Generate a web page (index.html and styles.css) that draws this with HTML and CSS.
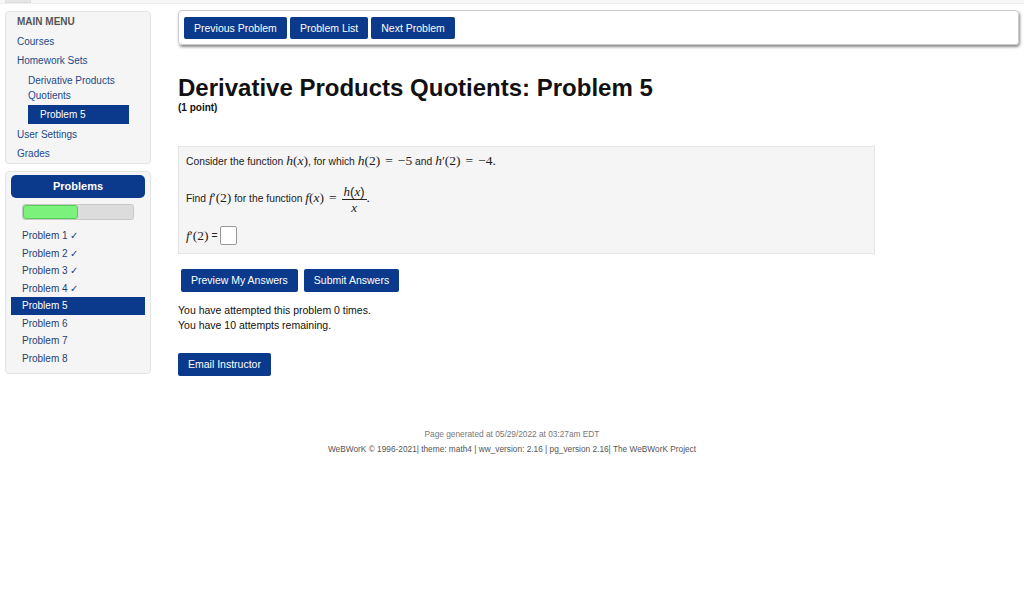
FILE: index.html
```html
<!DOCTYPE html>
<html lang="en">
<head>
  <meta charset="UTF-8">
  <title>Derivative Products Quotients: Problem 5</title>
  <link rel="stylesheet" href="styles.css">
</head>
<body>
<div class="topbar"><span class="topbar-btn"></span></div>
<div class="page">
  <div class="sidebar">
    <div class="well">
      <div class="menu-title">MAIN MENU</div>
      <ul class="menu">
        <li><a href="#">Courses</a></li>
        <li><a href="#">Homework Sets</a></li>
        <li>
          <ul class="submenu">
            <li class="wrap"><a href="#">Derivative Products Quotients</a></li>
            <li class="active"><a href="#">Problem 5</a></li>
          </ul>
        </li>
        <li><a href="#">User Settings</a></li>
        <li><a href="#">Grades</a></li>
      </ul>
    </div>
    <div class="well problems">
      <div class="problems-head">Problems</div>
      <div class="progress"><div class="progress-fill" style="width: 50%"></div></div>
      <ul class="problem-list">
        <li><a href="#">Problem 1 &#10003;</a></li>
        <li><a href="#">Problem 2 &#10003;</a></li>
        <li><a href="#">Problem 3 &#10003;</a></li>
        <li><a href="#">Problem 4 &#10003;</a></li>
        <li class="active"><a href="#">Problem 5</a></li>
        <li><a href="#">Problem 6</a></li>
        <li><a href="#">Problem 7</a></li>
        <li><a href="#">Problem 8</a></li>
      </ul>
    </div>
  </div>

  <div class="main">
    <div class="navbar">
      <a class="btn" href="#">Previous Problem</a>
      <a class="btn" href="#">Problem List</a>
      <a class="btn" href="#">Next Problem</a>
    </div>

    <h1>Derivative Products Quotients: Problem 5</h1>
    <div class="points">(1 point)</div>

    <div class="problem">
      <p>Consider the function <span class="m"><i>h</i>(<i>x</i>)</span>, for which <span class="m"><i>h</i>(2)<span class="op">=</span>&minus;5</span> and <span class="m"><i>h</i>&prime;(2)<span class="op">=</span>&minus;4.</span></p>
      <p class="find">Find <span class="m"><i>f</i>&prime;(2)</span> for the function <span class="m"><i>f</i>(<i>x</i>)<span class="op">=</span></span><span class="frac"><span class="num"><i>h</i>(<i>x</i>)</span><span class="den"><i>x</i></span></span><span class="m">.</span></p>
      <p class="answer"><span class="m"><i>f</i>&prime;(2)</span> = <input class="ans" type="text"></p>
    </div>

    <div class="actions">
      <a class="btn" href="#">Preview My Answers</a>
      <a class="btn" href="#">Submit Answers</a>
    </div>

    <div class="attempts">
      You have attempted this problem 0 times.<br>
      You have 10 attempts remaining.
    </div>

    <a class="btn email" href="#">Email Instructor</a>
  </div>
</div>

<div class="footer">
  <div>Page generated at 05/29/2022 at 03:27am EDT</div>
  <div>WeBWorK &copy; 1996-2021| theme: math4 | ww_version: 2.16 | pg_version 2.16| The WeBWorK Project</div>
</div>
</body>
</html>
```

FILE: styles.css
```css
* {
  box-sizing: border-box;
  font-family: "Liberation Sans", Arial, sans-serif;
}
body {
  margin: 0;
  background: white;
  color: #222;
  font-size: 10.5px;
}
a {
  text-decoration: none;
}
ul {
  list-style: none;
  margin: 0;
  padding: 0;
}
.topbar {
  height: 4px;
  background: #f7f7f7;
  border-bottom: 1px solid #eee;
  padding-left: 5px;
}
.topbar-btn {
  display: block;
  width: 26px;
  height: 3px;
  background: #e6e6e6;
  border: 1px solid #ddd;
  border-top: 0;
}
.page {
  display: flex;
  padding: 6px 5px 0 5px;
  gap: 27px;
}
.sidebar {
  width: 146px;
  flex-shrink: 0;
  display: flex;
  flex-direction: column;
  gap: 7px;
  padding-top: 1px;
}
.well {
  background: #f5f5f5;
  border: 1px solid #e3e3e3;
  border-radius: 4px;
}
.well:first-child {
  padding: 3px 0 0 11px;
}
.menu-title {
  color: #555;
  font-size: 10px;
  font-weight: bold;
  line-height: 14px;
  margin-bottom: 3px;
}
.menu a {
  display: block;
  color: #1c4a8a;
  font-size: 10px;
  line-height: 14px;
  padding: 2.5px 0;
}
.submenu {
  margin-left: 11px;
  width: 101px;
  padding: 0 0 1px;
}
.submenu .wrap a {
  line-height: 15px;
  padding: 3px 0 2px;
}
.submenu .active a {
  background: #0b3a8c;
  color: white;
  padding: 2.5px 12px;
}
.problems {
  padding: 3px 5px 6px;
}
.problems-head {
  background: #0b3a8c;
  color: white;
  font-weight: bold;
  font-size: 11px;
  text-align: center;
  height: 23px;
  line-height: 23px;
  border-radius: 5px;
}
.progress {
  margin: 6px 11px 7px;
  height: 16px;
  background: #dcdcdc;
  border: 1px solid #c8c8c8;
  border-radius: 3px;
  overflow: hidden;
}
.progress-fill {
  height: 100%;
  background: #7cf27c;
  border: 1px solid #55cc55;
  border-radius: 3px;
}
.problem-list a {
  display: block;
  color: #1f3f75;
  font-size: 10px;
  line-height: 17.5px;
  padding-left: 11px;
}
.problem-list .active a {
  background: #0b3a8c;
  color: white;
}
.main {
  flex: 1;
}
.navbar {
  border: 1px solid #ccc;
  border-radius: 4px;
  box-shadow: 1px 2px 3px #888;
  padding: 6px 5px;
  display: flex;
  gap: 3px;
  height: 35px;
}
.btn {
  display: inline-block;
  background: #0b3a8c;
  color: white;
  font-size: 10.5px;
  height: 22px;
  line-height: 22px;
  padding: 0 10px;
  border-radius: 2px;
}
h1 {
  font-size: 24px;
  margin: 30px 0 0;
  line-height: 26px;
  color: #111;
}
.points {
  font-weight: bold;
  font-size: 10px;
  line-height: 12px;
  margin-top: 1px;
  color: #111;
}
.problem {
  margin-top: 32px;
  width: 697px;
  background: #f5f5f5;
  border: 1px solid #e4e4e4;
  padding: 6px 7px 8px;
}
.problem p {
  margin: 0;
  font-size: 10.3px;
  line-height: 15px;
}
.m {
  font-family: "Liberation Serif", "Times New Roman", serif;
  font-size: 13.5px;
}
.m i, .frac i {
  font-family: "Liberation Serif", "Times New Roman", serif;
}
.op {
  font-family: "Liberation Serif", serif;
  margin: 0 5px;
}
.find {
  margin-top: 12px !important;
  line-height: 34px !important;
}
.frac {
  display: inline-flex;
  flex-direction: column;
  align-items: center;
  vertical-align: middle;
  font-family: "Liberation Serif", serif;
  font-size: 13px;
  line-height: 15px;
}
.num {
  border-bottom: 1px solid #222;
  padding: 0 2px;
}
.answer {
  margin-top: 10px !important;
  display: flex;
  align-items: center;
  gap: 3px;
}
.ans {
  width: 17px;
  height: 19px;
  border: 1px solid #999;
  border-radius: 2px;
  background: white;
  margin: 0;
  padding: 0;
}
.actions {
  margin: 15px 0 0 3px;
  display: flex;
  gap: 6px;
}
.actions .btn {
  height: 23px;
  line-height: 23px;
}
.attempts {
  margin-top: 11px;
  line-height: 15px;
  font-size: 10.5px;
  color: #111;
}
.email {
  margin-top: 20px;
  height: 23px;
  line-height: 23px;
}
.footer {
  text-align: center;
  font-size: 8.3px;
  color: #777;
  line-height: 15px;
  margin-top: 51px;
}
.footer div:last-child {
  color: #555;
}
```
